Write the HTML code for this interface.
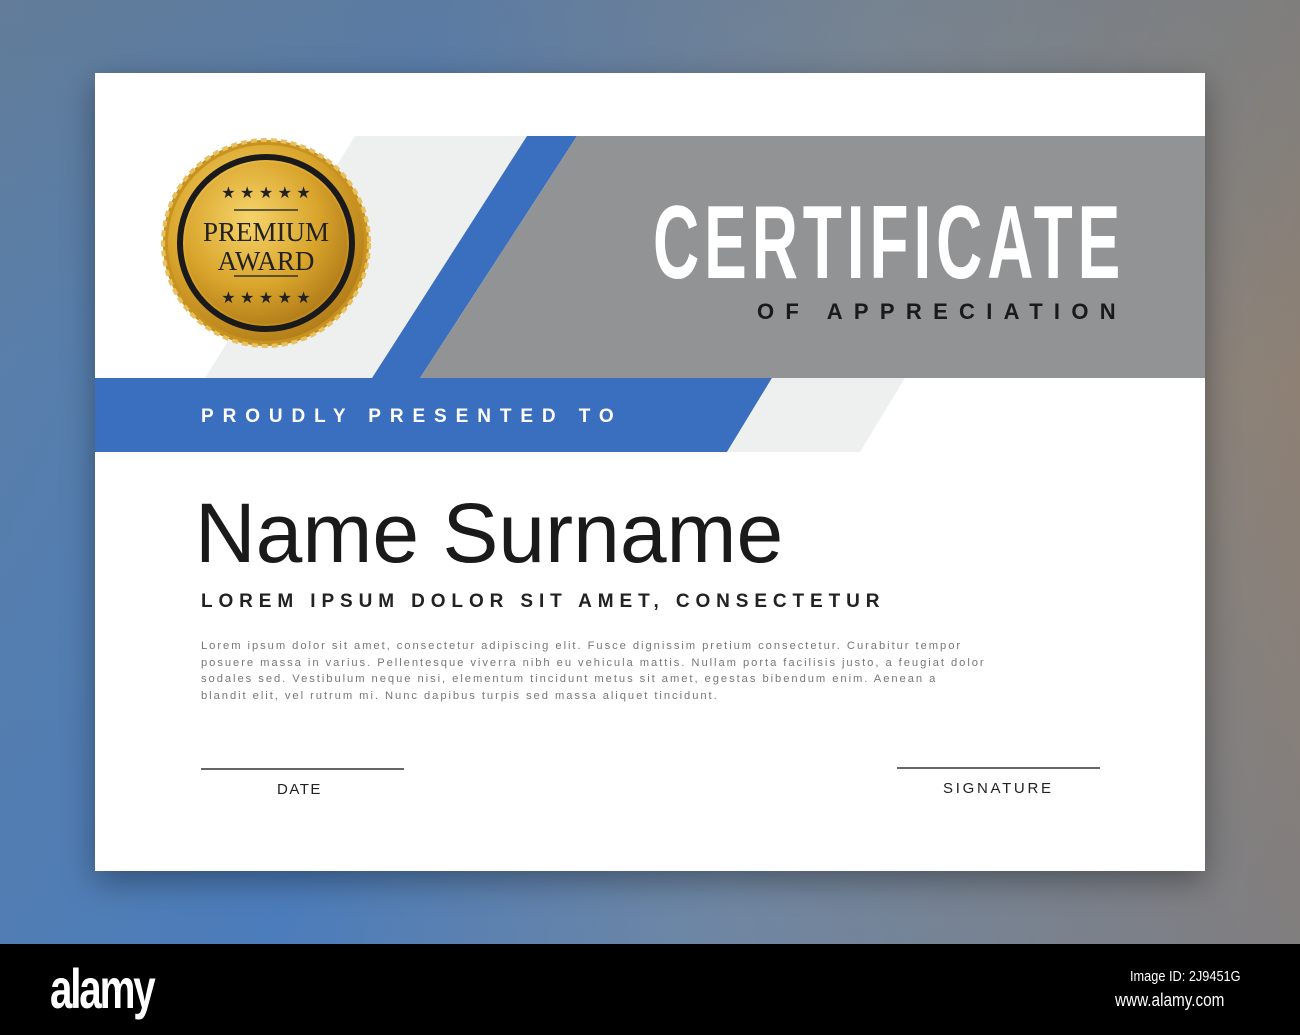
<!DOCTYPE html>
<html><head><meta charset="utf-8"><style>
*{margin:0;padding:0;box-sizing:border-box}
body{width:1300px;height:1035px;overflow:hidden;font-family:"Liberation Sans",sans-serif;position:relative;background:#000}
.bg{position:absolute;left:0;top:0;width:1300px;height:944px;background:linear-gradient(100deg,#5a7fa8 0%,#4f7db8 30%,#7b8a9a 60%,#927f6c 100%)}
.bg2{position:absolute;left:0;top:0;width:1300px;height:944px;background:linear-gradient(180deg,rgba(110,120,130,.4),rgba(0,0,0,0) 40%,rgba(60,120,200,.2))}
.card{position:absolute;left:95px;top:73px;width:1110px;height:798px;background:#fff;box-shadow:0 10px 30px rgba(0,0,0,.35);overflow:hidden}
.t{position:absolute;white-space:nowrap}
</style></head><body>
<div class="bg"></div><div class="bg2"></div>
<div class="card">
<svg width="1110" height="798" style="position:absolute;left:0;top:0">
<defs><radialGradient id="g" cx="40%" cy="35%" r="70%"><stop offset="0" stop-color="#f6d46a"/><stop offset=".6" stop-color="#d9a52c"/><stop offset="1" stop-color="#b07a18"/></radialGradient></defs>
<polygon points="260,63 432,63 277,305 110,305" fill="#eef0ef"/>
<polygon points="432,63 482,63 325,305 277,305" fill="#3a6fbf"/>
<polygon points="482,63 1110,63 1110,305 325,305" fill="#929395"/>
<polygon points="0,305 677,305 632,379 0,379" fill="#3a6fbf"/>
<polygon points="677,305 810,305 765,379 632,379" fill="#eef0ef"/>
<line x1="106" y1="696" x2="309" y2="696" stroke="#333" stroke-width="1.5"/>
<line x1="802" y1="695" x2="1005" y2="695" stroke="#333" stroke-width="1.5"/>
<g transform="translate(171,170)">
<circle r="103" fill="#c8921f" stroke="#e8c060" stroke-width="4" stroke-dasharray="6 4"/>
<circle r="98" fill="url(#g)"/>
<circle r="86" fill="none" stroke="#1a1a1a" stroke-width="6"/>
<circle r="81" fill="url(#g)"/>
<line x1="-32" y1="-33" x2="32" y2="-33" stroke="#333" stroke-width="1.5"/>
<line x1="-32" y1="33" x2="32" y2="33" stroke="#333" stroke-width="1.5"/>
<text x="0" y="-45" text-anchor="middle" font-size="16" fill="#222">★ ★ ★ ★ ★</text>
<text x="0" y="60" text-anchor="middle" font-size="16" fill="#222">★ ★ ★ ★ ★</text>
<text x="0" y="-2" text-anchor="middle" font-family="Liberation Serif" font-size="27" fill="#222">PREMIUM</text>
<text x="0" y="27" text-anchor="middle" font-family="Liberation Serif" font-size="27" fill="#222">AWARD</text>
</g>
</svg>
<div class="t" style="left:558px;top:118px;font-weight:bold;font-size:104px;line-height:104px;color:#fff;letter-spacing:8px;transform:scaleX(.615);transform-origin:left">CERTIFICATE</div>
<div class="t" style="left:662px;top:226px;font-weight:bold;font-size:22px;letter-spacing:11.3px;color:#1a1a1a">OF APPRECIATION</div>
<div class="t" style="left:106px;top:333px;font-weight:bold;font-size:19px;letter-spacing:8.9px;color:#fff">PROUDLY PRESENTED TO</div>
<div class="t" style="left:100px;top:410px;font-size:84px;line-height:100px;color:#1a1a1a;font-weight:300">Name Surname</div>
<div class="t" style="left:106px;top:518px;font-weight:bold;font-size:19px;letter-spacing:5.9px;color:#222">LOREM IPSUM DOLOR SIT AMET, CONSECTETUR</div>
<div class="t" style="left:106px;top:565px;font-size:11.2px;line-height:16.5px;color:#777;letter-spacing:1.95px">Lorem ipsum dolor sit amet, consectetur adipiscing elit. Fusce dignissim pretium consectetur. Curabitur tempor<br>posuere massa in varius. Pellentesque viverra nibh eu vehicula mattis. Nullam porta facilisis justo, a feugiat dolor<br>sodales sed. Vestibulum neque nisi, elementum tincidunt metus sit amet, egestas bibendum enim. Aenean a<br>blandit elit, vel rutrum mi. Nunc dapibus turpis sed massa aliquet tincidunt.</div>
<div class="t" style="left:182px;top:708px;font-size:15px;letter-spacing:1.5px;color:#222">DATE</div>
<div class="t" style="left:848px;top:707px;font-size:15px;letter-spacing:2.7px;color:#222">SIGNATURE</div>
</div>
<div class="t" style="left:50px;top:956px;font-size:56px;font-weight:bold;color:#fff;letter-spacing:-3px;transform:scaleX(.72);transform-origin:left">alamy</div>
<div class="t" style="left:1130px;top:968px;font-size:15px;color:#fff;transform:scaleX(.85);transform-origin:left">Image ID: 2J9451G</div>
<div class="t" style="left:1115px;top:990px;font-size:18px;color:#fff;transform:scaleX(.85);transform-origin:left">www.alamy.com</div>
</body></html>
